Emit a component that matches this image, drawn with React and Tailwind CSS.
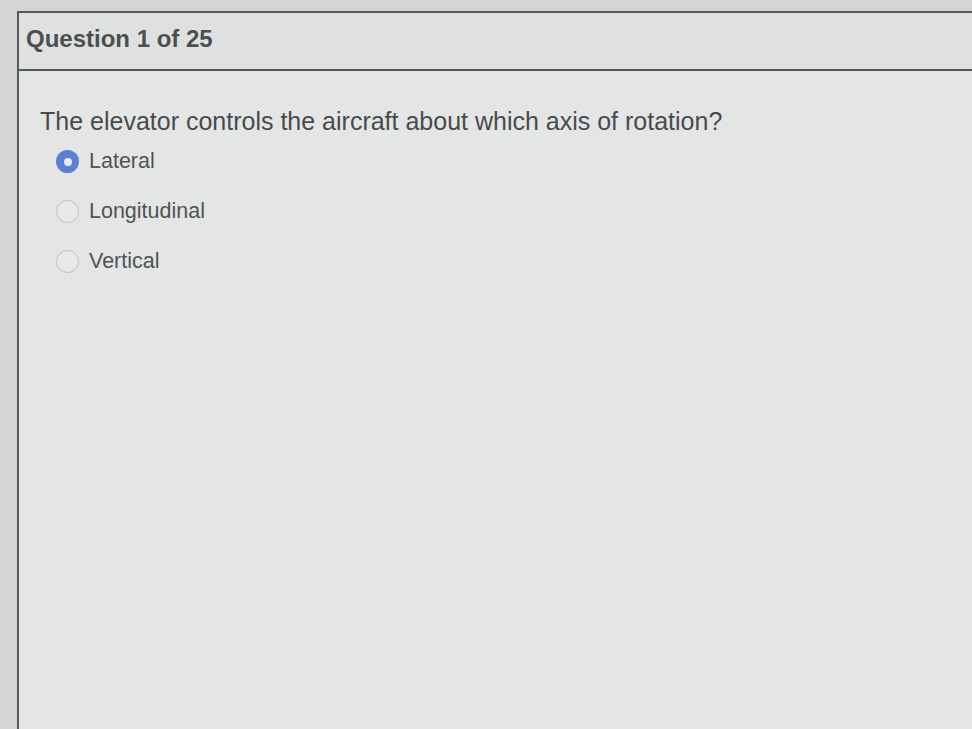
export default function App() {
  const opts = [
    { label: "Lateral", checked: true },
    { label: "Longitudinal" },
    { label: "Vertical" },
  ];
  return (
    <div className="w-[972px] h-[729px] overflow-hidden bg-[#d3d6d5] pt-[11px] pl-[17px]" style={{ fontFamily: '"Liberation Sans", Arial, sans-serif' }}>
      <div className="h-[740px] border-l-2 border-t-2 border-[#55595a] bg-[#e4e6e5]">
        <div className="h-[58px] bg-[#dfe1e0] border-b-2 border-[#55595a] flex items-center pl-[7px] pb-[4px]">
          <span className="text-[24px] font-bold text-[#4b4f51]">Question 1 of 25</span>
        </div>
        <div className="pl-[21px] pt-[32px]">
          <div className="text-[25px] text-[#484b4d]">The elevator controls the aircraft about which axis of rotation?</div>
          <div className="mt-[9px] flex flex-col gap-[26px] pl-[16px]">
            {opts.map((o) => (
              <div key={o.label} className="flex items-center gap-[10px] h-[24px]">
                {o.checked ? (
                  <span className="w-[23px] h-[23px] rounded-full bg-[#5a7fd6] flex items-center justify-center">
                    <span className="w-[8px] h-[8px] rounded-full bg-[#e8ecf2]" />
                  </span>
                ) : (
                  <span className="w-[23px] h-[23px] rounded-full border border-[#bfc2c1] bg-[#e8eae9]" />
                )}
                <span className="text-[21.5px] text-[#505456]">{o.label}</span>
              </div>
            ))}
          </div>
        </div>
      </div>
    </div>
  );
}
